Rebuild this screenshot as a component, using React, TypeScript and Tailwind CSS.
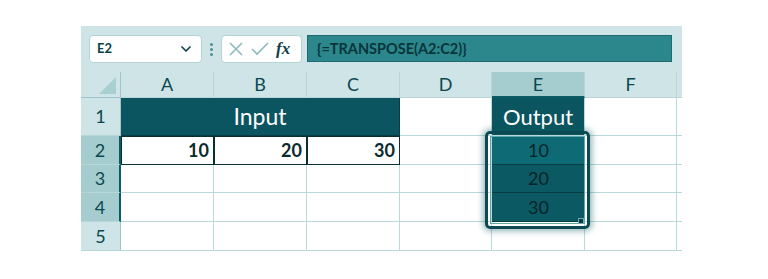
import { ChevronDown } from 'lucide-react';

const cols = ['A', 'B', 'C', 'D', 'E', 'F'];
const font = { fontFamily: 'Lato, "Open Sans", sans-serif' };

function ColHead({ label, active }: { label: string; active?: boolean }) {
  return (
    <div
      className={
        'flex items-center justify-center border-r border-b border-[#b6d6d8] text-[18px] text-[#0b4850] ' +
        (active ? 'bg-[#a5cdd0] border-b-[#0c5a63] border-b-2' : 'bg-[#cfe4e6]')
      }
    >
      {label}
    </div>
  );
}

function RowHead({ label, active }: { label: string; active?: boolean }) {
  return (
    <div
      className={
        'flex items-center justify-center border-b border-[#b6d6d8] text-[18px] text-[#0b4850] ' +
        (active ? 'bg-[#a5cdd0] border-r-2 border-r-[#0c5a63]' : 'bg-[#cfe4e6] border-r border-r-[#9cc6c9]')
      }
    >
      {label}
    </div>
  );
}

function Cell({ children, className = '' }: { children?: React.ReactNode; className?: string }) {
  return <div className={'border-r border-b border-[#b9d9db] bg-white ' + className}>{children}</div>;
}

export default function App() {
  return (
    <div className="h-[279px] w-[768px] bg-white" style={font}>
      <div className="relative ml-[81px] w-[601px] pt-[26px]">
        {/* formula bar */}
        <div className="flex h-[46px] items-start bg-[#cfe4e6] pl-[8px] pt-[9px]">
          <div className="flex h-[28px] w-[113px] items-center justify-between rounded-[4px] border border-[#b3d3d5] bg-white px-[7px]">
            <span className="text-[13px] font-bold text-[#0c3f46]">E2</span>
            <ChevronDown className="h-4 w-4 text-[#0c3f46]" strokeWidth={2.5} />
          </div>
          <div className="mx-[8px] flex h-[28px] flex-col items-center justify-center gap-[2px]">
            <span className="h-[3px] w-[3px] rounded-full bg-[#4f8d92]" />
            <span className="h-[3px] w-[3px] rounded-full bg-[#4f8d92]" />
            <span className="h-[3px] w-[3px] rounded-full bg-[#4f8d92]" />
          </div>
          <div className="flex h-[28px] w-[81px] items-center gap-[7px] rounded-[4px] border border-[#b3d3d5] bg-white pl-[6px]">
            <svg width="16" height="16" viewBox="0 0 16 16" fill="none" stroke="#8dbabd" strokeWidth="1.6">
              <path d="M2 2l12 12M14 2L2 14" />
            </svg>
            <svg width="18" height="14" viewBox="0 0 18 14" fill="none" stroke="#8dbabd" strokeWidth="1.6">
              <path d="M1 7l5 5L17 1" />
            </svg>
            <span
              className="text-[17px] font-bold italic text-[#0c3f46]"
              style={{ fontFamily: '"Liberation Serif", serif' }}
            >
              fx
            </span>
          </div>
          <div className="ml-[5px] flex h-[27px] w-[365px] items-center border border-[#1e6a70] bg-[#2b878c] px-[9px] text-[14.5px] font-bold text-[#08353a]">
            {'{=TRANSPOSE(A2:C2)}'}
          </div>
        </div>

        {/* grid */}
        <div className="grid grid-cols-[40px_93px_93px_93px_92px_93px_92px_5px] grid-rows-[26px_38px_29px_28px_29px_29px] bg-[#cfe4e6]">
          <div className="relative border-r border-b border-[#9cc6c9] bg-[#cfe4e6]">
            <div className="absolute right-[4px] bottom-[3px] h-0 w-0 border-b-[17px] border-l-[17px] border-b-[#a8cfd1] border-l-transparent" />
          </div>
          {cols.map((c) => (
            <ColHead key={c} label={c} active={c === 'E'} />
          ))}
          <div className="border-b border-[#b6d6d8] bg-[#cfe4e6]" />

          {/* row 1 */}
          <RowHead label="1" />
          <div className="col-span-3 flex items-center justify-center border-r border-b border-[#0a3d42] bg-[#0b5560] text-[23px] text-white">
            Input
          </div>
          <Cell />
          <div className="flex items-end justify-center border-r border-b border-[#b9d9db] bg-[#0b5560] pb-[2px] text-[22px] text-white">
            Output
          </div>
          <Cell />
          <div className="border-b border-[#b9d9db] bg-white" />

          {/* row 2 */}
          <RowHead label="2" active />
          {['10', '20', '30'].map((n) => (
            <div
              key={n}
              className="flex items-center justify-end border border-[#0a2f33] bg-white pr-[4px] text-[18px] font-bold text-[#0a2a2e]"
            >
              {n}
            </div>
          ))}
          <Cell />
          <div className="flex items-center justify-center border-b border-[#0a3d42] bg-[#0e6a74] text-[18px] text-[#062327]">
            10
          </div>
          <Cell />
          <div className="border-b border-[#b9d9db] bg-white" />

          {/* rows 3-4 */}
          {['3', '4'].map((r) => (
            <div key={r} className="contents">
              <RowHead label={r} active />
              <Cell />
              <Cell />
              <Cell />
              <Cell />
              <div className="flex items-center justify-center border-b border-[#0a3d42] bg-[#0b5a63] text-[18px] text-[#062327]">
                {r === '3' ? '20' : '30'}
              </div>
              <Cell />
              <div className="border-b border-[#b9d9db] bg-white" />
            </div>
          ))}

          {/* row 5 */}
          <RowHead label="5" />
          <Cell />
          <Cell />
          <Cell />
          <Cell />
          <Cell />
          <Cell />
          <div className="border-b border-[#b9d9db] bg-white" />
        </div>

        {/* selection frame over E2:E4 */}
        <div className="pointer-events-none absolute top-[131px] left-[404px] h-[98px] w-[105px] rounded-[5px] border-[3px] border-[#0b4a52] shadow-[0_0_6px_2px_rgba(11,90,99,0.45)]">
          <div className="absolute inset-[2px] border border-[#5fa5aa]" />
          <div className="absolute right-[3px] bottom-[2px] h-[6px] w-[6px] border border-[#6aa9ad] bg-[#0b3d44]" />
        </div>
      </div>
    </div>
  );
}
